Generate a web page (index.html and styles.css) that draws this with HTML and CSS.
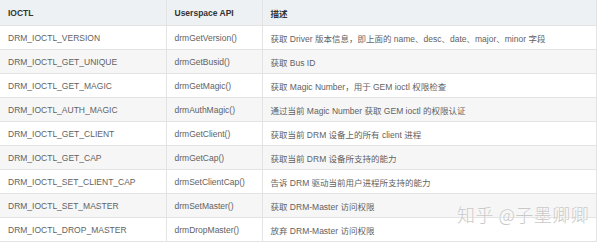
FILE: index.html
```html
<!DOCTYPE html>
<html lang="zh">
<head>
<meta charset="utf-8">
<link rel="stylesheet" href="styles.css">
</head>
<body>
<div class="wrap">
<table class="tbl">
<colgroup><col class="c1"><col class="c2"><col class="c3"></colgroup>
<thead>
<tr><th>IOCTL</th><th>Userspace API</th><th>描述</th></tr>
</thead>
<tbody>
<tr><td>DRM_IOCTL_VERSION</td><td>drmGetVersion()</td><td>获取 Driver 版本信息，即上面的 name、desc、date、major、minor 字段</td></tr>
<tr><td>DRM_IOCTL_GET_UNIQUE</td><td>drmGetBusid()</td><td>获取 Bus ID</td></tr>
<tr><td>DRM_IOCTL_GET_MAGIC</td><td>drmGetMagic()</td><td>获取 Magic Number，用于 GEM ioctl 权限检查</td></tr>
<tr><td>DRM_IOCTL_AUTH_MAGIC</td><td>drmAuthMagic()</td><td>通过当前 Magic Number 获取 GEM ioctl 的权限认证</td></tr>
<tr><td>DRM_IOCTL_GET_CLIENT</td><td>drmGetClient()</td><td>获取当前 DRM 设备上的所有 client 进程</td></tr>
<tr><td>DRM_IOCTL_GET_CAP</td><td>drmGetCap()</td><td>获取当前 DRM 设备所支持的能力</td></tr>
<tr><td>DRM_IOCTL_SET_CLIENT_CAP</td><td>drmSetClientCap()</td><td>告诉 DRM 驱动当前用户进程所支持的能力</td></tr>
<tr><td>DRM_IOCTL_SET_MASTER</td><td>drmSetMaster()</td><td>获取 DRM-Master 访问权限</td></tr>
<tr><td>DRM_IOCTL_DROP_MASTER</td><td>drmDropMaster()</td><td>放弃 DRM-Master 访问权限</td></tr>
</tbody>
</table>
<div class="mark">知乎 @子墨卿卿</div>
</div>
</body>
</html>
```
FILE: styles.css
```css
html, body {
  margin: 0;
  padding: 0;
  background: #fff;
}
.wrap {
  position: relative;
  width: 600px;
  height: 244px;
  overflow: hidden;
}
.tbl {
  width: 596px;
  table-layout: fixed;
  border-collapse: collapse;
  font-family: "Liberation Sans", "Noto Sans CJK SC", sans-serif;
  font-size: 8.5px;
  color: #626262;
}
.c1 { width: 166px; }
.c2 { width: 96px; }
.c3 { width: 334px; }
.tbl th, .tbl td {
  text-align: left;
  padding: 0 0 0 8px;
  border: 1px solid #e3e3e3;
  white-space: nowrap;
  overflow: hidden;
}
.tbl tr > :first-child { border-left: none; }
.tbl thead tr > * { border-top: none; }
.tbl th {
  height: 25px;
  background: #eef1f4;
  color: #333;
  font-weight: bold;
}
.tbl td {
  height: 23px;
}
.tbl tbody tr:nth-child(even) td {
  background: #f6f6f6;
}
.mark {
  position: absolute;
  left: 457px;
  top: 203px;
  font-family: "Noto Sans CJK SC", sans-serif;
  font-size: 18px;
  font-weight: 300;
  line-height: 22px;
  color: #c8c8c8;
  letter-spacing: 0.5px;
  text-shadow: 0 0 1px #fff, 0 0 2px #fff;
}
```
